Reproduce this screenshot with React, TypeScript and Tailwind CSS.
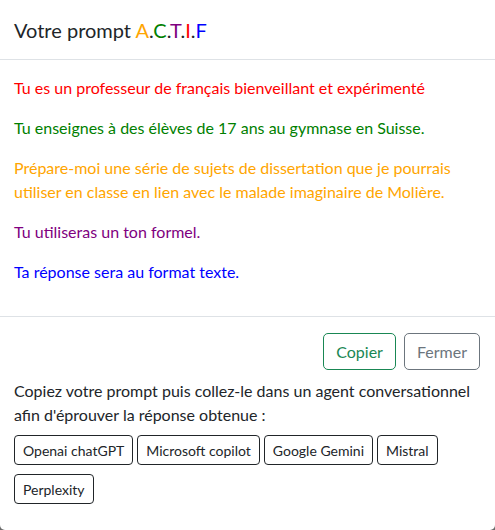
const lines = [
  { text: "Tu es un professeur de français bienveillant et expérimenté", color: "text-[#ff0000]" },
  { text: "Tu enseignes à des élèves de 17 ans au gymnase en Suisse.", color: "text-[#008000]" },
  {
    text: "Prépare-moi une série de sujets de dissertation que je pourrais utiliser en classe en lien avec le malade imaginaire de Molière.",
    color: "text-[#ffa500]",
  },
  { text: "Tu utiliseras un ton formel.", color: "text-[#800080]" },
  { text: "Ta réponse sera au format texte.", color: "text-[#0000ff]" },
];

const agents = ["Openai chatGPT", "Microsoft copilot", "Google Gemini", "Mistral", "Perplexity"];

export default function App() {
  return (
    <div className="h-[530px] w-[495px] bg-[#6b6b6b] font-['Lato',sans-serif] text-[#212529]">
      <div className="flex h-full flex-col rounded-b-[5px] bg-white">
        {/* Header */}
        <div className="flex h-[60px] items-center border-b border-[#dee2e6] px-[14px]">
          <h2 className="text-[20px] leading-[1.2]">
            Votre prompt <span className="text-[#ffa500]">A</span>.
            <span className="text-[#008000]">C</span>.
            <span className="text-[#800080]">T</span>.
            <span className="text-[#ff0000]">I</span>.
            <span className="text-[#0000ff]">F</span>
          </h2>
        </div>

        {/* Body */}
        <div className="border-b border-[#dee2e6] px-[14px] pt-4 pb-4">
          {lines.map((l) => (
            <p key={l.text} className={`mb-4 text-[16px] leading-6 ${l.color}`}>
              {l.text}
            </p>
          ))}
        </div>

        {/* Footer */}
        <div className="pt-4 pr-[15px] pl-[14px]">
          <div className="flex justify-end gap-2">
            <button className="h-[37px] rounded-[5px] border border-[#198754] px-3 text-[16px] text-[#198754]">
              Copier
            </button>
            <button className="h-[37px] rounded-[5px] border border-[#6c757d] px-3 text-[16px] text-[#6c757d]">
              Fermer
            </button>
          </div>
          <p className="mt-[9px] text-[16px] leading-[24px]">
            Copiez votre prompt puis collez-le dans un agent conversationnel afin d'éprouver la réponse obtenue :
          </p>
          <div className="mt-2 flex flex-wrap gap-x-1 gap-y-[9px]">
            {agents.map((a) => (
              <button
                key={a}
                className="h-[30px] rounded-[4px] border border-[#212529] px-2 text-[14px] text-[#212529]"
              >
                {a}
              </button>
            ))}
          </div>
        </div>
      </div>
    </div>
  );
}
